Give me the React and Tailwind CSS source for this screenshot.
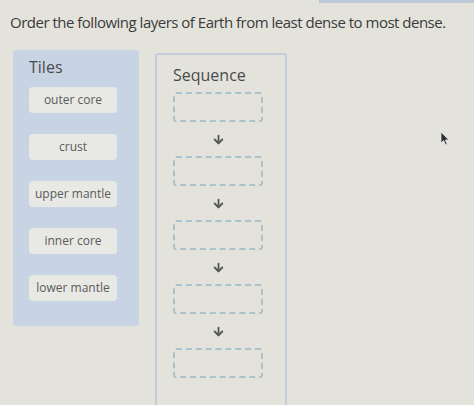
import React from 'react';
import { ArrowDown } from 'lucide-react';

const tiles = ['outer core', 'crust', 'upper mantle', 'inner core', 'lower mantle'];

const Cursor = () => (
  <svg className="absolute left-[440px] top-[131px]" width="10" height="15" viewBox="0 0 10 15">
    <path d="M1 1 L1 12 L3.6 9.6 L5.6 14 L7.2 13.3 L5.3 9 L8.8 9 Z" fill="#2b2f3a" stroke="#e4e4dd" strokeWidth="0.8" />
  </svg>
);

export default function App() {
  return (
    <div className="relative w-[474px] h-[405px] overflow-hidden bg-[#e3e3dc] font-['Open_Sans',sans-serif]">
      <div className="flex justify-end">
        <div className="w-[155px] h-[3px] bg-[#bcc7d8]" />
      </div>

      <h1 className="pl-[10px] pt-[8px] text-[15px] tracking-[-0.5px] leading-[22px] whitespace-nowrap text-[#3b3b3b]">
        Order the following layers of Earth from least dense to most dense.
      </h1>

      <div className="flex items-start mt-[17px]">
        {/* Tiles panel */}
        <div className="ml-[13px] w-[126px] h-[276px] rounded-[3px] bg-[#c8d4e3] pl-[16px] pt-[5px]">
          <div className="text-[16px] leading-[24px] text-[#4a4a4a]">Tiles</div>
          <div className="flex flex-col gap-[21px] mt-[8px]">
            {tiles.map((t) => (
              <div
                key={t}
                className="w-[88px] h-[26px] rounded-[4px] bg-[#e8e9e5] flex items-center justify-center text-[12px] text-[#5a5a5a]"
              >
                {t}
              </div>
            ))}
          </div>
        </div>

        {/* Sequence panel */}
        <div className="ml-[16px] mt-[3px] w-[132px] h-[380px] border-2 border-[#c3ccd8] rounded-[3px] pl-[16px] pt-[8px]">
          <div className="text-[16px] leading-[24px] text-[#4a4a4a]">Sequence</div>
          <div className="flex flex-col items-start mt-[5px]">
            {[0, 1, 2, 3, 4].map((i) => (
              <React.Fragment key={i}>
                <div className="w-[90px] h-[30px] border-2 border-dashed border-[#aac2ca] rounded-[3px]" />
                {i < 4 && (
                  <div className="w-[90px] h-[34px] flex items-center justify-center">
                    <ArrowDown size={13} strokeWidth={3.4} color="#555" />
                  </div>
                )}
              </React.Fragment>
            ))}
          </div>
        </div>
      </div>

      <Cursor />
    </div>
  );
}
